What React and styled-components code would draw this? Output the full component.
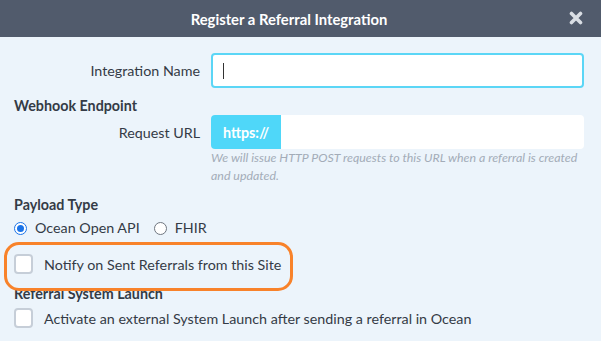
import React from "react";
import styled, { createGlobalStyle } from "styled-components";

const Global = createGlobalStyle`
  html, body { margin: 0; padding: 0; background: #ecf4fb; }
  body { font-family: Lato, "Noto Sans", sans-serif; color: #343b46; }
  * { box-sizing: border-box; }
`;

const Modal = styled.div`
  position: relative;
  width: 601px;
  height: 341px;
  overflow: hidden;
  background: #ecf4fb;
`;

const Header = styled.div`
  height: 37px;
  background: #515b6c;
  display: flex;
  align-items: center;
  justify-content: center;
  padding-right: 23px;
  position: relative;
`;

const Title = styled.h1`
  margin: 0;
  font-size: 14.8px;
  font-weight: 700;
  color: #ffffff;
`;

const Close = styled.button`
  position: absolute;
  right: 18px;
  top: 11px;
  width: 14px;
  height: 14px;
  padding: 0;
  border: 0;
  background: none;
  cursor: pointer;
  display: flex;
`;

const Body = styled.div`
  padding: 16px 17px 0 14px;
`;

const FieldRow = styled.div`
  display: grid;
  grid-template-columns: 186px 1fr;
  column-gap: 11px;
  align-items: center;
  margin-top: ${(p) => p.$mt || 0}px;
`;

const Label = styled.label`
  text-align: right;
  font-size: 14.3px;
  color: #343b46;
`;

const TextInput = styled.div`
  height: 35px;
  background: #fff;
  border: 2px solid #5bd6f6;
  border-radius: 4px;
  display: flex;
  align-items: center;
  padding-left: 10px;
`;

const Caret = styled.span`
  width: 1px;
  height: 16px;
  background: #333;
`;

const Group = styled.div`
  height: 34px;
  display: flex;
  border-radius: 4px;
  overflow: hidden;
  background: #fff;
`;

const Addon = styled.span`
  width: 70px;
  background: #4fd7f9;
  color: #fff;
  font-weight: 700;
  font-size: 14.3px;
  display: flex;
  align-items: center;
  justify-content: center;
`;

const Help = styled.p`
  grid-column: 2;
  margin: 0;
  font-size: 12.4px;
  font-style: italic;
  line-height: 18px;
  color: #a3acb8;
`;

const Heading = styled.h2`
  margin: ${(p) => p.$mt || 0}px 0 0;
  font-size: 14.3px;
  font-weight: 700;
  color: #343b46;
  line-height: 16px;
`;

const Radios = styled.div`
  display: flex;
  align-items: center;
  margin-top: 6px;
  font-size: 14.3px;
  line-height: 18px;
`;

const RadioItem = styled.label`
  display: flex;
  align-items: center;
  gap: 8px;
  margin-right: 14px;
`;

const RadioDot = styled.span`
  width: 13px;
  height: 13px;
  border-radius: 50%;
  border: 1px solid ${(p) => (p.$on ? "#1a73e8" : "#6f7680")};
  background: #fff;
  display: flex;
  align-items: center;
  justify-content: center;
  &::after {
    content: "";
    width: 7px;
    height: 7px;
    border-radius: 50%;
    background: ${(p) => (p.$on ? "#1a73e8" : "transparent")};
  }
`;

const CheckRow = styled.label`
  display: flex;
  align-items: center;
  gap: 11px;
  height: 20px;
  margin-top: ${(p) => p.$mt || 0}px;
  font-size: 14.3px;
`;

const Box = styled.span`
  width: 19px;
  height: 20px;
  border: 2px solid #c6ced8;
  border-radius: 4px;
  background: #fff;
  flex: none;
`;

const Highlight = styled.div`
  position: absolute;
  left: 4px;
  top: 242px;
  width: 289px;
  height: 49px;
  border: 3px solid #f8822a;
  border-radius: 15px;
  pointer-events: none;
`;

export default function App() {
  return (
    <>
      <Global />
      <Modal>
        <Header>
          <Title>Register a Referral Integration</Title>
          <Close aria-label="close">
            <svg width="14" height="14" viewBox="0 0 14 14">
              <path d="M2.5 2.5 L11.5 11.5 M11.5 2.5 L2.5 11.5" stroke="#d9dee4" strokeWidth="3.6" strokeLinecap="round" />
            </svg>
          </Close>
        </Header>
        <Body>
          <FieldRow>
            <Label>Integration Name</Label>
            <TextInput><Caret /></TextInput>
          </FieldRow>
          <Heading $mt={10}>Webhook Endpoint</Heading>
          <FieldRow $mt={1}>
            <Label>Request URL</Label>
            <Group><Addon>https://</Addon></Group>
            <Help>We will issue HTTP POST requests to this URL when a referral is created and updated.</Help>
          </FieldRow>
          <Heading $mt={12}>Payload Type</Heading>
          <Radios>
            <RadioItem><RadioDot $on />Ocean Open API</RadioItem>
            <RadioItem><RadioDot />FHIR</RadioItem>
          </Radios>
          <CheckRow $mt={17}><Box />Notify on Sent Referrals from this Site</CheckRow>
          <Heading $mt={12}>Referral System Launch</Heading>
          <CheckRow $mt={6}><Box />Activate an external System Launch after sending a referral in Ocean</CheckRow>
        </Body>
        <Highlight />
      </Modal>
    </>
  );
}
